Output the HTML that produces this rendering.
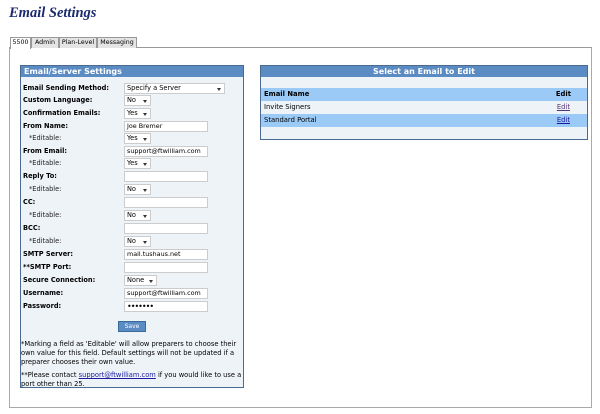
<!DOCTYPE html>
<html><head><meta charset="utf-8"><style>
*{margin:0;padding:0;box-sizing:border-box}
body{width:600px;height:414px;background:#fff;position:relative;overflow:hidden;font-family:"DejaVu Sans","Liberation Sans",sans-serif;font-size:7px;color:#000}
.a{position:absolute;white-space:nowrap}
h1{position:absolute;left:9px;top:5px;font:italic bold 14.5px "Liberation Serif",serif;color:#1b2a6e}
.tab{position:absolute;top:37px;height:11px;border:1px solid #999;border-bottom:none;background:#e4e4e4;font-size:6.3px;line-height:10px;text-align:center;overflow:hidden}
.box{position:absolute;left:9px;top:47px;width:583px;height:361px;border:1px solid #aaa;border-top-color:#999}
.lp{position:absolute;left:20px;top:65px;width:224px;height:323px;border:1px solid #4a6a90;background:#eef3f8}
.hd{position:absolute;left:0;top:0;right:0;height:11px;background:#5b8bc3;color:#fff;font-weight:bold;font-size:8px;line-height:11px}
.lb{position:absolute;left:2px;font-weight:bold;font-size:6.6px}
.ed{position:absolute;left:8px;font-size:6.6px;color:#222}
.in{position:absolute;left:103px;width:84px;height:11px;background:#fff;border:1px solid #ccc;font-size:6.4px;line-height:9px;padding-left:2px;overflow:hidden}
.sel{position:absolute;left:103px;height:11px;background:#fff;border:1px solid #ccc;font-size:6.6px;line-height:9px;padding-left:2px}
.sel:after{content:"";position:absolute;right:3px;top:4px;border:2px solid transparent;border-top:3px solid #333}
.rp{position:absolute;left:260px;top:65px;width:328px;height:75px;border:1px solid #4a6a90;background:#eef3f8}
.r{position:absolute;left:0;right:0;height:13px;line-height:13px;font-size:6.8px}
</style></head><body>
<h1>Email Settings</h1>
<div class="box"></div>
<div class="tab" style="left:10px;width:21px;background:#fff;height:12px">5500</div>
<div class="tab" style="left:31px;width:28px">Admin</div>
<div class="tab" style="left:59px;width:38px">Plan-Level</div>
<div class="tab" style="left:97px;width:40px">Messaging</div>

<div class="lp">
<div class="hd" style="padding-left:3px">Email/Server Settings</div>
<div class="lb a" style="top:18px">Email Sending Method:</div><div class="sel" style="top:17px;width:101px">Specify a Server</div>
<div class="lb a" style="top:30px">Custom Language:</div><div class="sel" style="top:29px;width:27px">No</div>
<div class="lb a" style="top:43px">Confirmation Emails:</div><div class="sel" style="top:42px;width:27px">Yes</div>
<div class="lb a" style="top:56px">From Name:</div><div class="in" style="top:55px">Joe Bremer</div>
<div class="ed a" style="top:68px">*Editable:</div><div class="sel" style="top:67px;width:27px">Yes</div>
<div class="lb a" style="top:81px">From Email:</div><div class="in" style="top:80px">support@ftwilliam.com</div>
<div class="ed a" style="top:93px">*Editable:</div><div class="sel" style="top:92px;width:27px">Yes</div>
<div class="lb a" style="top:106px">Reply To:</div><div class="in" style="top:105px"></div>
<div class="ed a" style="top:119px">*Editable:</div><div class="sel" style="top:118px;width:27px">No</div>
<div class="lb a" style="top:132px">CC:</div><div class="in" style="top:131px"></div>
<div class="ed a" style="top:145px">*Editable:</div><div class="sel" style="top:144px;width:27px">No</div>
<div class="lb a" style="top:158px">BCC:</div><div class="in" style="top:157px"></div>
<div class="ed a" style="top:171px">*Editable:</div><div class="sel" style="top:170px;width:27px">No</div>
<div class="lb a" style="top:184px">SMTP Server:</div><div class="in" style="top:183px">mail.tushaus.net</div>
<div class="lb a" style="top:197px">**SMTP Port:</div><div class="in" style="top:196px"></div>
<div class="lb a" style="top:210px">Secure Connection:</div><div class="sel" style="top:209px;width:33px">None</div>
<div class="lb a" style="top:223px">Username:</div><div class="in" style="top:222px">support@ftwilliam.com</div>
<div class="lb a" style="top:236px">Password:</div><div class="in" style="top:235px;font-size:8px;letter-spacing:-1px">•••••••</div>
<div class="a" style="left:97px;top:255px;width:28px;height:11px;background:#5b8bc3;border:1px solid #3a6a9a;color:#fff;text-align:center;line-height:9px;font-size:6px">Save</div>
<div class="a" style="left:0;top:274px;white-space:normal;width:222px;line-height:9px;font-size:6.7px">*Marking a field as 'Editable' will allow preparers to choose their own value for this field. Default settings will not be updated if a preparer chooses their own value.</div>
<div class="a" style="left:0;top:305px;white-space:normal;width:222px;line-height:9px;font-size:6.7px">**Please contact <u style="color:#1a1aa0">support@ftwilliam.com</u> if you would like to use a port other than 25.</div>
</div>

<div class="rp">
<div class="hd" style="text-align:center">Select an Email to Edit</div>
<div class="r" style="top:22px;background:#9ccaf6;font-weight:bold;padding-left:3px">Email Name<span style="position:absolute;right:16px">Edit</span></div>
<div class="r" style="top:35px;padding-left:3px">Invite Signers<u style="position:absolute;right:17px;color:#553377">Edit</u></div>
<div class="r" style="top:48px;background:#9ccaf6;padding-left:3px">Standard Portal<u style="position:absolute;right:17px;color:#1a1aa0">Edit</u></div>
</div>
</body></html>
